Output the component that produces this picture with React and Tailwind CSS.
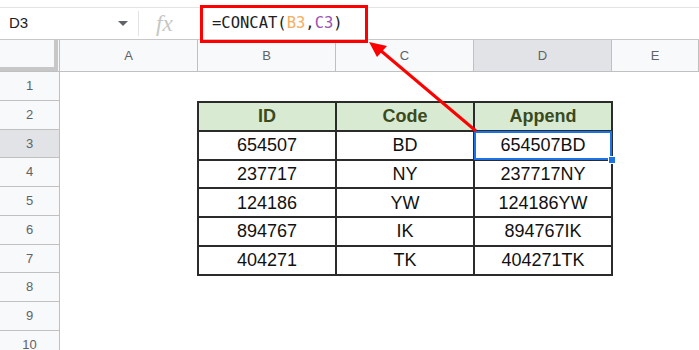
import React from "react";

const cols = [
  { name: "A", w: "w-[138px]" },
  { name: "B", w: "w-[138px]" },
  { name: "C", w: "w-[138px]" },
  { name: "D", w: "w-[138px]", active: true },
  { name: "E", w: "flex-1" },
];

const rows = [
  ["654507", "BD", "654507BD"],
  ["237717", "NY", "237717NY"],
  ["124186", "YW", "124186YW"],
  ["894767", "IK", "894767IK"],
  ["404271", "TK", "404271TK"],
];

function FormulaBar() {
  return (
    <div className="flex h-[33px] mt-[7px] border-t border-[#e2e3e3] border-b border-b-[#c7c7c7] bg-white">
      <div className="flex items-center w-[139px] pl-[9px] pr-[10px] border-r border-[#e2e3e3] my-[3px]">
        <span className="text-[15px] text-[#202124]">D3</span>
        <span className="ml-auto w-0 h-0 border-l-[5px] border-r-[5px] border-t-[5px] border-l-transparent border-r-transparent border-t-[#5f6368]" />
      </div>
      <div className="flex items-center w-[58px] pl-[17px]">
        <span className="text-[23px] italic text-[#c4c7c5] font-['Liberation_Serif',serif] leading-none">fx</span>
      </div>
      <div className="flex items-center pl-[15px] font-['DejaVu_Sans_Mono',monospace] text-[15.5px] text-[#202124]">
        =CONCAT(<span className="text-[#f6ae5f]">B3</span>,<span className="text-[#9a55b4]">C3</span>)
      </div>
    </div>
  );
}

function ColumnHeaders() {
  return (
    <div className="flex h-[32px] bg-[#f8f9fa] border-b border-[#c0c0c0]">
      <div className="w-[60px] border-r border-[#c0c0c0] relative">
        <div className="absolute left-0 top-0 w-[58px] h-[31px] border-r-[4px] border-b-[4px] border-[#c7c7c7] -mr-[2px]" />
      </div>
      {cols.map((c) => (
        <div
          key={c.name}
          className={`${c.w} flex items-center justify-center border-r border-[#c0c0c0] text-[13px] text-[#5f6368] ${c.active ? "bg-[#e1e3e6]" : ""}`}
        >
          {c.name}
        </div>
      ))}
    </div>
  );
}

function RowHeaders() {
  return (
    <div className="w-[60px] flex flex-col bg-[#f8f9fa] border-r border-[#c0c0c0]">
      {[1, 2, 3, 4, 5, 6, 7, 8, 9, 10].map((n) => (
        <div
          key={n}
          className={`h-[28.75px] shrink-0 flex items-center justify-center border-b border-[#c0c0c0] text-[13px] text-[#5f6368] ${n === 3 ? "bg-[#e1e3e6]" : ""}`}
        >
          {n}
        </div>
      ))}
    </div>
  );
}

function DataTable() {
  return (
    <table className="border-collapse border-2 border-[#2b2b2b] text-[18px] text-[#111]">
      <thead>
        <tr className="bg-[#d9ead3] h-[28.75px]">
          {["ID", "Code", "Append"].map((h) => (
            <th key={h} className="w-[138px] border-2 border-[#2b2b2b] font-bold text-[#3b4a1d] p-0 leading-none">
              {h}
            </th>
          ))}
        </tr>
      </thead>
      <tbody>
        {rows.map((r, i) => (
          <tr key={r[0]} className="h-[28.75px]">
            {r.map((v, j) => (
              <td key={j} className="relative border-2 border-[#2b2b2b] text-center p-0 leading-none">
                {i === 0 && j === 2 && (
                  <>
                    <div className="absolute -inset-[1px] border-2 border-[#1a73e8] pointer-events-none" />
                    <div className="absolute -right-[5px] -bottom-[5px] w-[8px] h-[8px] bg-[#1a73e8] border border-white" />
                  </>
                )}
                {v}
              </td>
            ))}
          </tr>
        ))}
      </tbody>
    </table>
  );
}

export default function App() {
  return (
    <div className="relative w-[699px] h-[350px] overflow-hidden bg-white font-['Liberation_Sans',Arial,sans-serif]">
      <FormulaBar />
      <ColumnHeaders />
      <div className="flex">
        <RowHeaders />
        <div className="pl-[137px] pt-[29px]">
          <DataTable />
        </div>
      </div>
      {/* annotation */}
      <div className="absolute left-[200px] top-[5px] w-[168px] h-[38px] border-[3px] border-[#f00]" />
      <svg className="absolute left-0 top-0 pointer-events-none" width="699" height="350">
        <line x1="476" y1="131" x2="380" y2="50" stroke="#f00" strokeWidth="3" />
        <polygon points="369,42 387,46 377,57" fill="#f00" />
      </svg>
    </div>
  );
}
